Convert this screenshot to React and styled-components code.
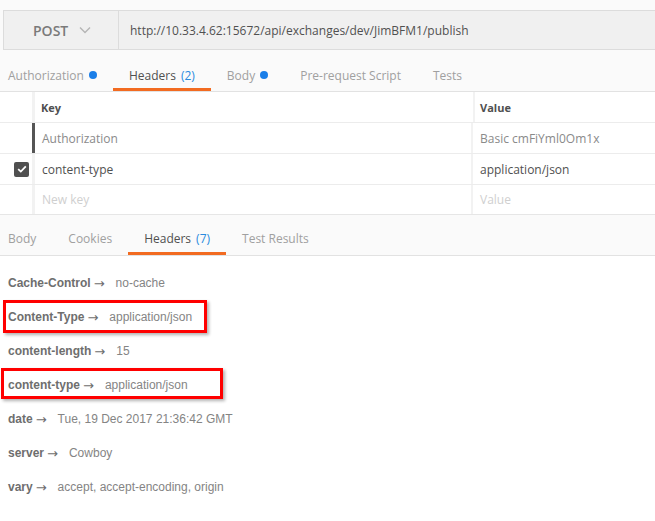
import React from "react";
import styled, { createGlobalStyle } from "styled-components";

const Global = createGlobalStyle`
  html, body { margin: 0; padding: 0; background: #ffffff; }
  body { width: 655px; height: 521px; overflow: hidden; font-family: "Open Sans", sans-serif; }
`;

const Page = styled.div`
  width: 655px;
  height: 521px;
  background: #ffffff;
  display: flex;
  flex-direction: column;
`;

const Top = styled.div`
  background: #fafafa;
  padding: 10px 0 0 3px;
`;

const RequestBar = styled.div`
  display: flex;
  height: 38px;
  border: 1px solid #dcdcdc;
  border-right: none;
  background: #f0f0f0;
  box-sizing: content-box;
`;

const Method = styled.div`
  width: 85px;
  padding-left: 29px;
  border-right: 1px solid #dcdcdc;
  display: flex;
  align-items: center;
  gap: 11px;
  font-size: 14px;
  font-weight: 600;
  color: #7a7a7a;
`;

const Url = styled.div`
  display: flex;
  align-items: center;
  padding-left: 11px;
  font-size: 12px;
  color: #505050;
`;

const TabBar = styled.div`
  display: flex;
  height: ${(p) => p.$h}px;
  padding-top: ${(p) => p.$pt}px;
  box-sizing: border-box;
  background: #fafafa;
  border-bottom: 1px solid #e2e2e2;
`;

const Tab = styled.div`
  position: relative;
  display: flex;
  align-items: center;
  gap: 5px;
  padding: 0 16px;
  font-size: 12px;
  color: ${(p) => (p.$active ? "#505050" : "#a0a0a0")};
  &:first-child { padding-left: 8px; }
  &::after {
    content: "";
    display: ${(p) => (p.$active ? "block" : "none")};
    position: absolute;
    left: 0;
    right: 0;
    bottom: 0;
    height: 3px;
    background: #f26b21;
  }
`;

const Count = styled.span`
  color: #2a8bde;
`;

const Dot = styled.span`
  width: 8px;
  height: 8px;
  border-radius: 50%;
  background: #1a7ee8;
  display: inline-block;
`;

const Table = styled.div`
  background: #ffffff;
  border-bottom: 1px solid #e6e6e6;
`;

const Row = styled.div`
  display: flex;
  height: ${(p) => (p.$last ? 29 : 30)}px;
  border-top: ${(p) => (p.$first ? "none" : "1px solid #ececec")};
  background: #ffffff;
`;

const CheckCell = styled.div`
  width: 32px;
  display: flex;
  align-items: center;
  padding-left: 14px;
  box-sizing: border-box;
`;

const KeyCell = styled.div`
  flex: 1;
  display: flex;
  align-items: center;
  border-left: 3px solid ${(p) => (p.$focus ? "#555555" : "#f2f2f2")};
  padding-left: ${(p) => (p.$head ? 6 : 7)}px;
  font-size: ${(p) => (p.$head ? 11 : 12)}px;
  font-weight: ${(p) => (p.$head ? 700 : 400)};
  color: ${(p) => p.$color || "#505050"};
`;

const ValueCell = styled.div`
  width: 175px;
  display: flex;
  align-items: center;
  border-left: 2px solid #f2f2f2;
  padding-left: ${(p) => (p.$head ? 5 : 7)}px;
  font-size: ${(p) => (p.$head ? 11 : 12)}px;
  font-weight: ${(p) => (p.$head ? 700 : 400)};
  color: ${(p) => p.$color || "#505050"};
`;

const CheckBox = styled.div`
  width: 15px;
  height: 15px;
  border-radius: 2px;
  background: #505050;
  display: flex;
  align-items: center;
  justify-content: center;
`;

const HeaderList = styled.div`
  padding-top: 10px;
  font-family: "Liberation Sans", Arial, sans-serif;
  font-size: 12px;
`;

const HeaderRow = styled.div`
  position: relative;
  height: 34px;
  display: flex;
  align-items: center;
  padding-left: 8px;
`;

const HKey = styled.span`
  font-weight: 700;
  color: #6e6e6e;
`;

const Arrow = styled.span`
  font-family: "DejaVu Sans", sans-serif;
  font-size: 13px;
  color: #6e6e6e;
  margin: 0 11px 0 3px;
`;

const HVal = styled.span`
  color: #848484;
`;

const Mark = styled.div`
  position: absolute;
  left: ${(p) => p.$left}px;
  top: ${(p) => p.$top}px;
  width: ${(p) => p.$w}px;
  height: ${(p) => p.$h}px;
  border: 3px solid #ff0000;
  box-sizing: border-box;
  box-shadow: 2px 2px 3px rgba(0, 0, 0, 0.3);
  pointer-events: none;
`;

const headers = [
  ["Cache-Control", "no-cache"],
  ["Content-Type", "application/json", { left: 3, top: 0, w: 204, h: 33 }],
  ["content-length", "15"],
  ["content-type", "application/json", { left: 1, top: 0, w: 222, h: 31 }],
  ["date", "Tue, 19 Dec 2017 21:36:42 GMT"],
  ["server", "Cowboy"],
  ["vary", "accept, accept-encoding, origin"],
];

export default function App() {
  return (
    <Page>
      <Global />
      <Top>
        <RequestBar>
          <Method>
            POST
            <svg width="12" height="8" viewBox="0 0 12 8">
              <path d="M1 1.5 L6 6.5 L11 1.5" fill="none" stroke="#b5b5b5" strokeWidth="1.4" />
            </svg>
          </Method>
          <Url>http://10.33.4.62:15672/api/exchanges/dev/JimBFM1/publish</Url>
        </RequestBar>
      </Top>
      <TabBar $h={42} $pt={9}>
        <Tab>Authorization <Dot /></Tab>
        <Tab $active>Headers <Count>(2)</Count></Tab>
        <Tab>Body <Dot /></Tab>
        <Tab>Pre-request Script</Tab>
        <Tab>Tests</Tab>
      </TabBar>
      <Table>
        <Row $first>
          <CheckCell />
          <KeyCell $head>Key</KeyCell>
          <ValueCell $head>Value</ValueCell>
        </Row>
        <Row>
          <CheckCell />
          <KeyCell $focus $color="#8a8a8a">Authorization</KeyCell>
          <ValueCell $color="#8a8a8a">Basic cmFiYml0Om1x</ValueCell>
        </Row>
        <Row>
          <CheckCell>
            <CheckBox>
              <svg width="10" height="8" viewBox="0 0 10 8">
                <path d="M1.2 4.2 L3.8 6.6 L8.8 1.4" fill="none" stroke="#ffffff" strokeWidth="1.8" />
              </svg>
            </CheckBox>
          </CheckCell>
          <KeyCell>content-type</KeyCell>
          <ValueCell>application/json</ValueCell>
        </Row>
        <Row $last>
          <CheckCell />
          <KeyCell $color="#cfcfcf">New key</KeyCell>
          <ValueCell $color="#cfcfcf">Value</ValueCell>
        </Row>
      </Table>
      <TabBar $h={41} $pt={6}>
        <Tab>Body</Tab>
        <Tab>Cookies</Tab>
        <Tab $active>Headers <Count>(7)</Count></Tab>
        <Tab>Test Results</Tab>
      </TabBar>
      <HeaderList>
        {headers.map(([k, v, m]) => (
          <HeaderRow key={k + v}>
            <HKey>{k}</HKey>
            <Arrow>→</Arrow>
            <HVal>{v}</HVal>
            {m && <Mark $left={m.left} $top={m.top} $w={m.w} $h={m.h} />}
          </HeaderRow>
        ))}
      </HeaderList>
    </Page>
  );
}
